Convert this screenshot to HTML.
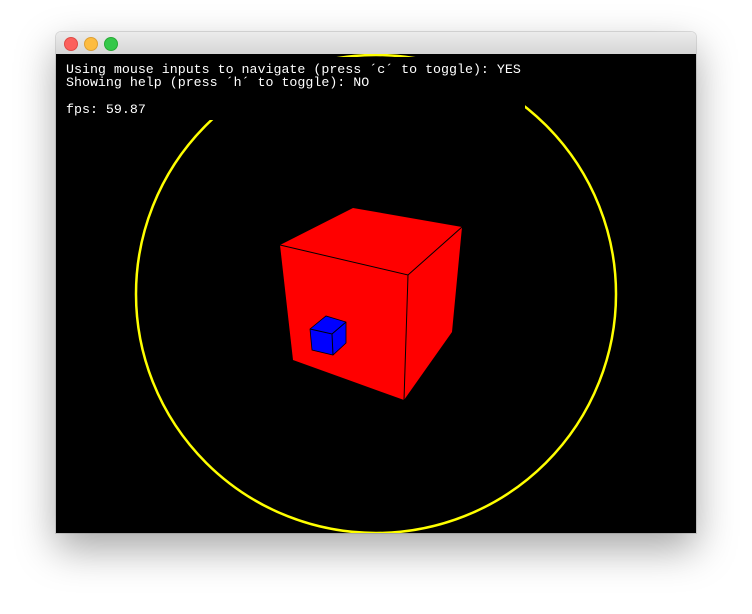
<!DOCTYPE html>
<html><head><style>
html,body{margin:0;padding:0;background:#fff;width:752px;height:614px;overflow:hidden}
.win{position:absolute;left:56px;top:32px;width:640px;height:501px;border-radius:5px 5px 0 0;overflow:hidden;box-shadow:0 16px 40px rgba(0,0,0,0.35),0 0 0 1px rgba(0,0,0,0.12)}
.tb{height:22px;background:linear-gradient(#ececec,#d6d6d6);border-bottom:1px solid #b8b8b8;position:relative}
.dot{position:absolute;top:5px;width:12px;height:12px;border-radius:50%}
.c{position:absolute;top:22px;left:0;width:640px;height:479px;background:#000}
.t{position:absolute;left:10px;font-family:"Liberation Mono",monospace;font-size:13.3px;color:#fff;white-space:pre;line-height:14px}
</style></head><body>
<div class="win">
<div class="tb">
<div class="dot" style="left:8px;background:#fc605c;border:0.5px solid #de4b45"></div>
<div class="dot" style="left:28px;background:#fdbc40;border:0.5px solid #dea033"></div>
<div class="dot" style="left:48px;background:#34c84a;border:0.5px solid #27aa35"></div>
</div>
<div class="c">
<svg width="640" height="479" style="position:absolute;left:0;top:0">
<g transform="translate(-56,-54)">
<ellipse cx="376" cy="294" rx="240" ry="239" fill="none" stroke="#ff0" stroke-width="2.5"/>
<rect x="60" y="57" width="465" height="63" fill="#000"/>
<polygon points="280,245 353,208 462,227 452,332 404,400 293,360" fill="#f00"/>
<polyline points="280,245 408,275 462,227" fill="none" stroke="#000" stroke-width="1"/>
<line x1="408" y1="275" x2="404" y2="400" stroke="#000" stroke-width="1"/>
<polygon points="310,329 326,316 346,322 346,343 333,355 312,350" fill="#00f" stroke="#000" stroke-width="0.8"/>
<polyline points="310,329 332,334 346,322" fill="none" stroke="#000" stroke-width="1"/>
<line x1="332" y1="334" x2="333" y2="355" stroke="#000" stroke-width="1"/>
</g>
</svg>
<div class="t" style="top:9px">Using mouse inputs to navigate (press ´c´ to toggle): YES</div>
<div class="t" style="top:22px">Showing help (press ´h´ to toggle): NO</div>
<div class="t" style="top:49px">fps: 59.87</div>
</div>
</div>
</body></html>
